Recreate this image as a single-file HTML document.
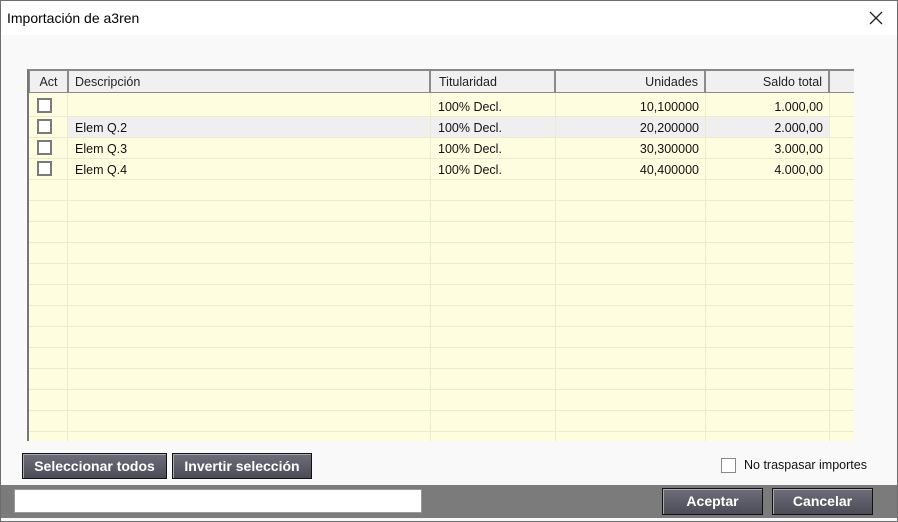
<!DOCTYPE html>
<html><head><meta charset="utf-8"><style>
*{margin:0;padding:0;box-sizing:border-box}
body{width:898px;height:522px;position:relative;overflow:hidden;background:#f7f7f7;font-family:"Liberation Sans",sans-serif;font-size:12px;color:#111}
.win{position:absolute;left:0;top:0;width:898px;height:522px;border:1px solid #6d6d6d;background:#f9f9f9}
.title{position:absolute;left:0;top:0;width:896px;height:34px;background:#fff;font-size:14px;padding:9px 0 0 6px;color:#000}
.x{position:absolute;left:866px;top:8px;width:18px;height:18px}
.grid{position:absolute;left:27px;top:69px;width:827px;height:372px;background:#fefde0;border-left:2px solid #777;border-top:2px solid #888;overflow:hidden}
.hdr{position:absolute;top:0;height:22px;background:#f0f0f0;border:1px solid #8a8a8a;border-top:none;font-size:12.5px;padding-top:4px;color:#222}
.vl{position:absolute;top:22px;bottom:0;width:1px;background:#ecebd0}
.hl{position:absolute;left:0;right:0;height:1px;background:#ecebd0}
.cell{position:absolute;font-size:12.5px;color:#111;height:21px;padding-top:4px}
.cb{position:absolute;left:8px;width:15px;height:15px;border:2px solid #7a7a7a;background:#fff}
.btn{position:absolute;background:linear-gradient(#6e6e7a,#4c4c58);border:1px solid #111;box-shadow:inset 1px 1px 0 #aaa;color:#fff;font-weight:bold;font-size:14px;text-align:center;padding-top:4px}
.bar{position:absolute;left:1px;top:485px;width:896px;height:33px;background:#7b7b7b}
</style></head><body>
<div class="win">
<div class="title">Importación de a3ren</div>
<svg class="x" viewBox="0 0 18 18"><path d="M3 3L15 15M15 3L3 15" stroke="#222" stroke-width="1.3"/></svg>
</div>
<div class="grid">
<div class="hdr" style="left:0;width:39px;text-align:center">Act</div>
<div class="hdr" style="left:39px;width:362px;padding-left:6px">Descripción</div>
<div class="hdr" style="left:401px;width:125px;padding-left:8px">Titularidad</div>
<div class="hdr" style="left:526px;width:150px;text-align:right;padding-right:6px">Unidades</div>
<div class="hdr" style="left:676px;width:124px;text-align:right;padding-right:6px">Saldo total</div>
<div class="hdr" style="left:800px;width:27px"></div>
<div style="position:absolute;left:39px;top:46px;width:761px;height:21px;background:#efefef"></div>
<div class="vl" style="left:38px"></div><div class="vl" style="left:401px"></div><div class="vl" style="left:526px"></div><div class="vl" style="left:676px"></div><div class="vl" style="left:800px"></div>
<div class="hl" style="top:45px"></div><div class="hl" style="top:66px"></div><div class="hl" style="top:87px"></div><div class="hl" style="top:108px"></div><div class="hl" style="top:129px"></div><div class="hl" style="top:150px"></div><div class="hl" style="top:171px"></div><div class="hl" style="top:192px"></div><div class="hl" style="top:213px"></div><div class="hl" style="top:234px"></div><div class="hl" style="top:255px"></div><div class="hl" style="top:276px"></div><div class="hl" style="top:297px"></div><div class="hl" style="top:318px"></div><div class="hl" style="top:339px"></div><div class="hl" style="top:360px"></div>
<div class="cb" style="top:27px"></div><div class="cb" style="top:48px"></div><div class="cb" style="top:69px"></div><div class="cb" style="top:90px"></div>
<div class="cell" style="top:25px;left:409px">100% Decl.</div><div class="cell" style="top:25px;left:526px;width:144px;text-align:right">10,100000</div><div class="cell" style="top:25px;left:676px;width:118px;text-align:right">1.000,00</div>
<div class="cell" style="top:46px;left:46px">Elem Q.2</div><div class="cell" style="top:46px;left:409px">100% Decl.</div><div class="cell" style="top:46px;left:526px;width:144px;text-align:right">20,200000</div><div class="cell" style="top:46px;left:676px;width:118px;text-align:right">2.000,00</div>
<div class="cell" style="top:67px;left:46px">Elem Q.3</div><div class="cell" style="top:67px;left:409px">100% Decl.</div><div class="cell" style="top:67px;left:526px;width:144px;text-align:right">30,300000</div><div class="cell" style="top:67px;left:676px;width:118px;text-align:right">3.000,00</div>
<div class="cell" style="top:88px;left:46px">Elem Q.4</div><div class="cell" style="top:88px;left:409px">100% Decl.</div><div class="cell" style="top:88px;left:526px;width:144px;text-align:right">40,400000</div><div class="cell" style="top:88px;left:676px;width:118px;text-align:right">4.000,00</div>
</div>
<div class="btn" style="left:22px;top:453px;width:145px;height:26px">Seleccionar todos</div>
<div class="btn" style="left:172px;top:453px;width:140px;height:26px">Invertir selección</div>
<div style="position:absolute;left:721px;top:458px;width:15px;height:15px;border:1px solid #888;background:#fff"></div>
<div style="position:absolute;left:744px;top:458px;font-size:12.5px;color:#111">No traspasar importes</div>
<div class="bar"></div>
<div style="position:absolute;left:14px;top:489px;width:408px;height:24px;background:#fff;border:1px solid #999"></div>
<div class="btn" style="left:662px;top:488px;width:101px;height:27px">Aceptar</div>
<div class="btn" style="left:772px;top:488px;width:101px;height:27px">Cancelar</div>
</body></html>
